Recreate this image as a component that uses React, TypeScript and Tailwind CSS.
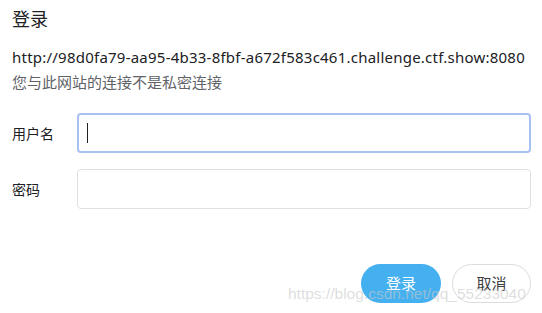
export default function App() {
  return (
    <div className="relative w-[542px] h-[313px] bg-white overflow-hidden text-[#202124]" style={{ fontFamily: '"Noto Sans", "Noto Sans CJK SC", sans-serif' }}>
      <div className="flex flex-col px-3 pt-[6px]">
        <h1 className="text-[18px] leading-[26px] text-[#202124]">登录</h1>
        <p className="mt-[15px] text-[15px] leading-[20px] whitespace-nowrap tracking-[0.23px]">
          http://98d0fa79-aa95-4b33-8fbf-a672f583c461.challenge.ctf.show:8080
        </p>
        <p className="mt-[5px] text-[15px] leading-[20px] text-[#5f6368]">您与此网站的连接不是私密连接</p>

        <div className="mt-[21px] flex flex-col gap-[16px]">
          <div className="flex items-center">
            <label className="w-[65px] text-[14px] text-[#202124]">用户名</label>
            <div className="flex-1 mr-[-1px] h-[40px] rounded-[4px] border-2 border-[#a8c1f2] flex items-center pl-[8px]">
              <span className="w-px h-[20px] bg-[#202124]" />
            </div>
          </div>
          <div className="flex items-center">
            <label className="w-[65px] text-[14px] text-[#202124]">密码</label>
            <div className="flex-1 mr-[-1px] h-[40px] rounded-[4px] border border-[#e0e0e0]" />
          </div>
        </div>

        <div className="mt-[55px] flex justify-end gap-[11px] mr-[-1px]">
          <button className="w-[80px] h-[39px] rounded-full bg-[#45b0f0] text-white text-[15px]">登录</button>
          <button className="w-[79px] h-[39px] rounded-full border border-[#dadce0] text-[#3c4043] text-[15px] bg-white">取消</button>
        </div>
      </div>

      <div className="absolute left-[288px] top-[284px] text-[15.5px] leading-[20px] text-[#c8c8c8]/60 whitespace-nowrap" style={{ fontFamily: '"Liberation Sans", sans-serif' }}>
        https://blog.csdn.net/qq_55233040
      </div>
    </div>
  );
}
